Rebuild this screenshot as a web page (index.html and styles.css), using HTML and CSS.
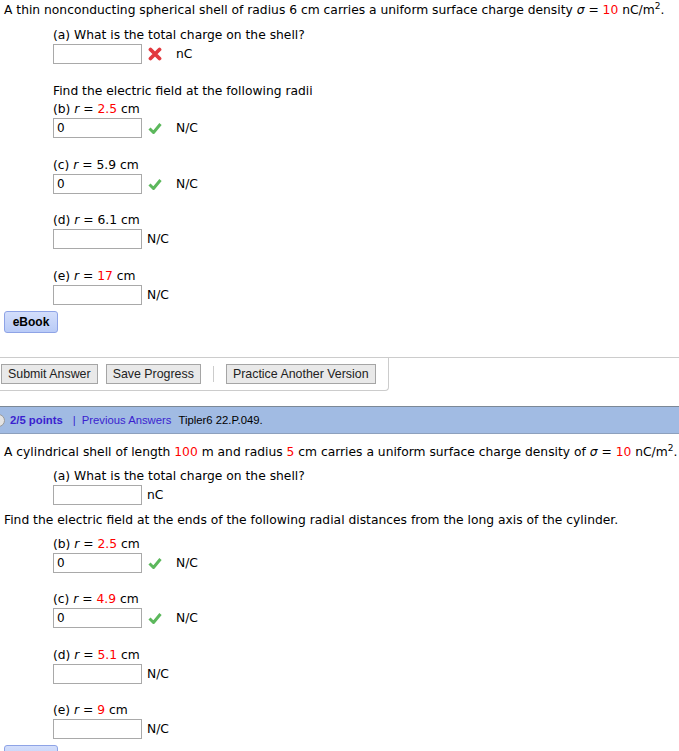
FILE: index.html
```html
<!DOCTYPE html>
<html>
<head>
<meta charset="utf-8">
<link rel="stylesheet" href="styles.css">
</head>
<body>
<div class="page">
  <div class="q q1">
    <p class="stem">A thin nonconducting spherical shell of radius 6 cm carries a uniform surface charge density <i class="var">σ</i> = <span class="red">10</span> nC/m<sup>2</sup>.</p>
    <div class="part first">
      <div class="label">(a) What is the total charge on the shell?</div>
      <div class="row"><span class="box"></span><svg class="icon" width="14" height="14" viewBox="0 0 14 14"><path d="M2.5 2.5 L11.5 11.5 M11.5 2.5 L2.5 11.5" stroke="#e2393e" stroke-width="3.8" stroke-linecap="round"/></svg><span class="unit">nC</span></div>
    </div>
    <div class="find">Find the electric field at the following radii</div>
    <div class="part nogap">
      <div class="label">(b) <i class="var">r</i> = <span class="red">2.5</span> cm</div>
      <div class="row"><span class="box">0</span><svg class="icon" width="14" height="14" viewBox="0 0 14 14"><path d="M1.5 7.5 L5.5 11.5 L12.5 3" fill="none" stroke="#5cb85c" stroke-width="3" stroke-linejoin="round"/></svg><span class="unit">N/C</span></div>
    </div>
    <div class="part">
      <div class="label">(c) <i class="var">r</i> = 5.9 cm</div>
      <div class="row"><span class="box">0</span><svg class="icon" width="14" height="14" viewBox="0 0 14 14"><path d="M1.5 7.5 L5.5 11.5 L12.5 3" fill="none" stroke="#5cb85c" stroke-width="3" stroke-linejoin="round"/></svg><span class="unit">N/C</span></div>
    </div>
    <div class="part">
      <div class="label">(d) <i class="var">r</i> = 6.1 cm</div>
      <div class="row"><span class="box"></span><span class="unit plain">N/C</span></div>
    </div>
    <div class="part">
      <div class="label">(e) <i class="var">r</i> = <span class="red">17</span> cm</div>
      <div class="row"><span class="box"></span><span class="unit plain">N/C</span></div>
    </div>
    <div class="ebook">eBook</div>
  </div>
  <div class="actions">
    <div class="actbox">
      <span class="btn">Submit Answer</span>
      <span class="btn">Save Progress</span>
      <span class="sep"></span>
      <span class="btn">Practice Another Version</span>
    </div>
  </div>
  <div class="header">
    <span class="dot"></span>
    <span class="pts">2/5 points</span>
    <span class="bar">|</span>
    <span class="prev">Previous Answers</span>
    <span class="ref">Tipler6 22.P.049.</span>
  </div>
  <div class="q q2">
    <p class="stem">A cylindrical shell of length <span class="red">100</span> m and radius <span class="red">5</span> cm carries a uniform surface charge density of <i class="var">σ</i> = <span class="red">10</span> nC/m<sup>2</sup>.</p>
    <div class="part first">
      <div class="label">(a) What is the total charge on the shell?</div>
      <div class="row"><span class="box"></span><span class="unit plain">nC</span></div>
    </div>
    <div class="find wide">Find the electric field at the ends of the following radial distances from the long axis of the cylinder.</div>
    <div class="part nogap">
      <div class="label">(b) <i class="var">r</i> = <span class="red">2.5</span> cm</div>
      <div class="row"><span class="box">0</span><svg class="icon" width="14" height="14" viewBox="0 0 14 14"><path d="M1.5 7.5 L5.5 11.5 L12.5 3" fill="none" stroke="#5cb85c" stroke-width="3" stroke-linejoin="round"/></svg><span class="unit">N/C</span></div>
    </div>
    <div class="part">
      <div class="label">(c) <i class="var">r</i> = <span class="red">4.9</span> cm</div>
      <div class="row"><span class="box">0</span><svg class="icon" width="14" height="14" viewBox="0 0 14 14"><path d="M1.5 7.5 L5.5 11.5 L12.5 3" fill="none" stroke="#5cb85c" stroke-width="3" stroke-linejoin="round"/></svg><span class="unit">N/C</span></div>
    </div>
    <div class="part">
      <div class="label">(d) <i class="var">r</i> = <span class="red">5.1</span> cm</div>
      <div class="row"><span class="box"></span><span class="unit plain">N/C</span></div>
    </div>
    <div class="part">
      <div class="label">(e) <i class="var">r</i> = <span class="red">9</span> cm</div>
      <div class="row"><span class="box"></span><span class="unit plain">N/C</span></div>
    </div>
    <div class="ebook">eBook</div>
  </div>
</div>
</body>
</html>
```
FILE: styles.css
```css
html, body {
  margin: 0;
  padding: 0;
  background: #fff;
}
.page {
  font-family: "DejaVu Sans", Verdana, sans-serif;
  font-size: 12.3px;
  color: #000;
  overflow: hidden;
  width: 679px;
  height: 751px;
}
.stem {
  margin: 0;
  padding: 0 4px;
  line-height: 18px;
  white-space: nowrap;
}
.q1 .stem { padding-top: 1px; }
sup { font-size: 9px; line-height: 0; vertical-align: 5px; }
.var { font-style: italic; }
.red { color: #f00; }
.part {
  padding-left: 53px;
  margin-top: 17.5px;
}
.part.nogap { margin-top: 0; }
.part.first { margin-top: 7px; margin-bottom: 18px; }
.label { line-height: 18px; height: 18px; white-space: nowrap; }
.row {
  display: flex;
  align-items: center;
  height: 20px;
}
.box {
  box-sizing: border-box;
  width: 89px;
  height: 20px;
  border: 1px solid #a9a9a9;
  padding: 1px 3px;
  font-size: 12px;
  line-height: 16px;
  color: #000;
}
.icon { margin-left: 6px; margin-right: 14px; }
.unit.plain { margin-left: 5px; }
.find {
  padding-left: 53px;
  line-height: 18px;
  white-space: nowrap;
}
.find.wide { padding-left: 4px; margin-bottom: 6px; }
.q2 .part.first { margin-top: 6px; margin-bottom: 6px; }
.ebook {
  margin: 6px 0 0 4px;
  width: 54px;
  height: 22px;
  box-sizing: border-box;
  border: 1px solid #8ea3e6;
  border-radius: 3px;
  background: linear-gradient(#d3defb, #b9cbf7);
  font-family: "Liberation Sans", Arial, sans-serif;
  font-weight: bold;
  font-size: 12px;
  line-height: 20px;
  text-align: center;
  color: #000;
}
.actions {
  margin-top: 24px;
  border-top: 1px solid #ccc;
}
.actbox {
  display: inline-flex;
  align-items: center;
  border-right: 1px solid #ccc;
  border-bottom: 1px solid #ccc;
  border-bottom-right-radius: 4px;
  padding: 6px 12px 6px 1px;
  gap: 8px;
}
.btn {
  font-family: "Liberation Sans", Arial, sans-serif;
  font-size: 12.4px;
  background: #e9e9e9;
  border: 1px solid #a5a5a5;
  padding: 0 6px;
  height: 20px;
  line-height: 18px;
  box-sizing: border-box;
  color: #222;
}
.sep {
  width: 1px;
  height: 16px;
  background: #ccc;
  margin: 0 4px;
}
.header {
  margin-top: 15px;
  height: 28px;
  box-sizing: border-box;
  background: #a1bbe3;
  border-top: 1px solid #7c8896;
  border-bottom: 1px solid #8da0bd;
  display: flex;
  align-items: center;
  font-family: "Liberation Sans", Arial, sans-serif;
  font-size: 11.3px;
  position: relative;
}
.dot {
  position: absolute;
  left: -8px;
  top: 7px;
  width: 11px;
  height: 11px;
  border-radius: 50%;
  background: #e4e4e4;
  border: 1px solid #999;
}
.pts { margin-left: 10px; color: #3a1fcf; font-weight: bold; }
.bar { margin-left: 10px; color: #3a1fcf; }
.prev { margin-left: 6px; color: #3a1fcf; }
.ref { margin-left: 7px; color: #000; }
.q2 { padding-top: 9px; }
```
